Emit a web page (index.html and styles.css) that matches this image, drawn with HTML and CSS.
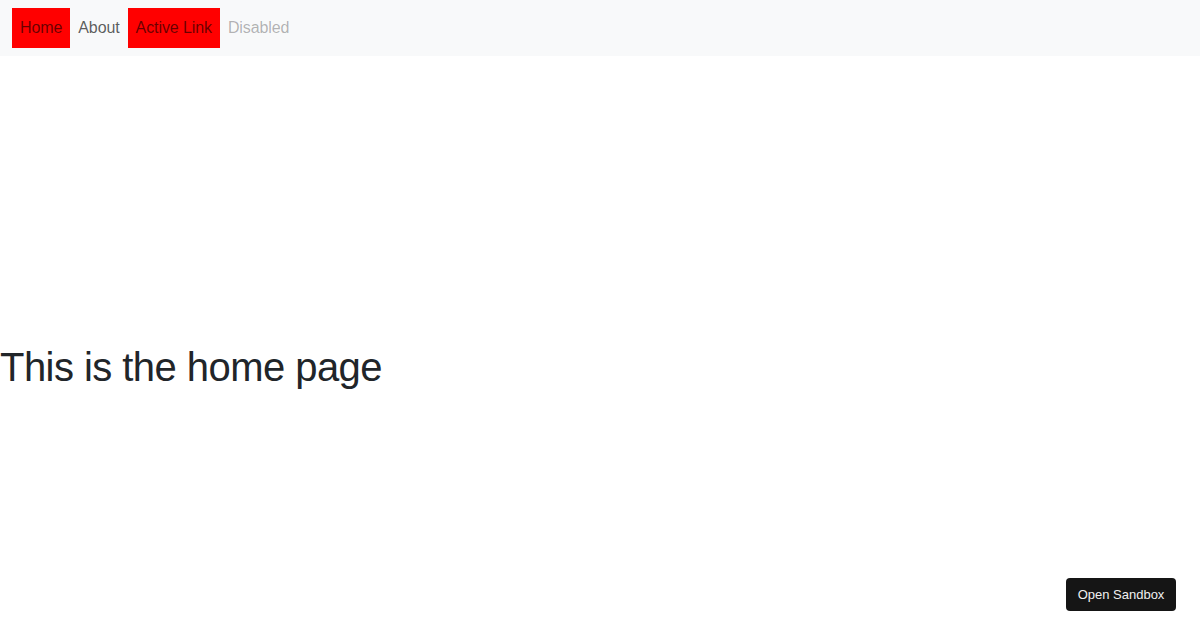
FILE: index.html
```html
<!DOCTYPE html>
<html lang="en">
<head>
<meta charset="utf-8">
<title>Home</title>
<link rel="stylesheet" href="styles.css">
</head>
<body>
<nav class="navbar">
  <div class="nav-inner">
    <a class="nav-link active" href="#">Home</a>
    <a class="nav-link" href="#">About</a>
    <a class="nav-link active" href="#">Active Link</a>
    <span class="nav-link disabled">Disabled</span>
  </div>
</nav>
<main class="page">
  <h1 class="title">This is the home page</h1>
</main>
<a class="sandbox-btn" href="#">Open Sandbox</a>
</body>
</html>
```
FILE: styles.css
```css
* { box-sizing: border-box; }
html, body { margin: 0; padding: 0; }
body {
  font-family: "Liberation Sans", Arial, Helvetica, sans-serif;
  font-size: 16px;
  line-height: 1.5;
  color: #212529;
  background: #fff;
  overflow: hidden;
  height: 100vh;
}
.navbar {
  background: #f8f9fa;
  height: 56px;
  padding: 8px 12px;
}
.nav-inner {
  display: flex;
  align-items: center;
}
.nav-link {
  display: block;
  padding: 8px;
  line-height: 24px;
  letter-spacing: -0.1px;
  color: rgba(0, 0, 0, 0.65);
  text-decoration: none;
}
.nav-link.active {
  background: #ff0000;
  color: rgba(0, 0, 0, 0.6);
}
.nav-link.disabled {
  color: rgba(0, 0, 0, 0.3);
}
.page {
  height: calc(100vh - 56px);
  padding-top: 56px;
  display: flex;
  align-items: center;
}
.title {
  margin: 0 0 8px 0;
  font-size: 40px;
  font-weight: 400;
  line-height: 1.2;
  letter-spacing: -0.55px;
  color: #212529;
}
.sandbox-btn {
  position: fixed;
  right: 24px;
  bottom: 19px;
  width: 110px;
  height: 33px;
  display: flex;
  align-items: center;
  justify-content: center;
  background: #151515;
  color: #f0f0f0;
  border-radius: 4px;
  font-size: 13px;
  text-decoration: none;
}
```
